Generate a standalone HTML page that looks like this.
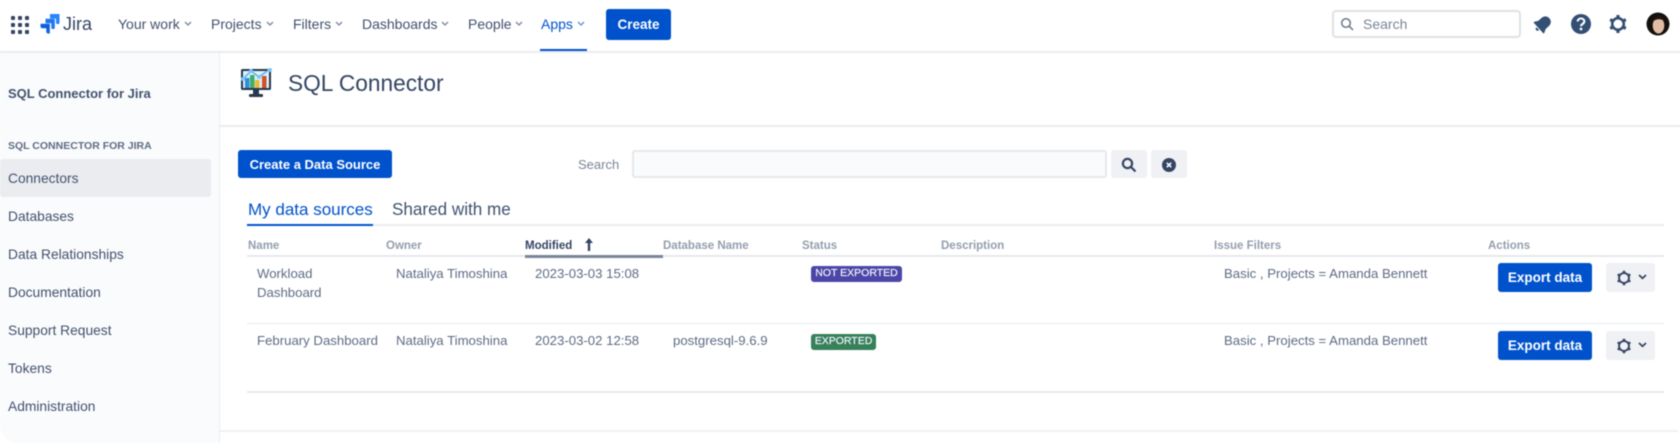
<!DOCTYPE html>
<html lang="en">
<head>
<meta charset="utf-8">
<title>SQL Connector</title>
<style>
html,body{margin:0;padding:0;width:1680px;height:444px;overflow:hidden;background:#fff}
#p{position:relative;width:1680px;height:444px;overflow:hidden;font-family:"Liberation Sans",sans-serif;filter:blur(.55px);background:#fff}
#p div,#p a,#p svg{position:absolute}
.t{white-space:nowrap;line-height:20px;height:20px;transform:translateY(-50%)}
.nav{font-size:14px;color:#42526e;top:24px}
.side{font-size:13.800px;color:#42526e;left:8px;margin-top:1px}
.th{font-size:11.500px;color:#7a869a;top:246px;font-weight:bold;opacity:.8}
.td{font-size:13.200px;color:#5e6c84;margin-top:1px}
.btn{background:#0052cc;color:#fff;border-radius:3px;text-align:center;font-size:13.500px;font-weight:bold}
.gray{background:#f0f1f4;border-radius:3px}
.line{background:#ebecf0}
.badge{color:#f2f2fa;font-size:10.500px;border-radius:3px;text-align:center;line-height:15px;height:16px;-webkit-text-stroke:.2px #f2f2fa}
</style>
</head>
<body>
<div id="p">
  <!-- sidebar -->
  <div style="left:0;top:51px;width:220px;height:392px;background:#fafbfc;border-bottom-left-radius:18px;border-right:1px solid #ebecf0;box-sizing:border-box"></div>
  <!-- top nav -->
  <div style="left:0;top:0;width:1680px;height:51px;background:#fff;border-bottom:2px solid #ebecf0;box-sizing:content-box"></div>

  <svg style="left:11px;top:16px" width="18" height="18" viewBox="0 0 18 18" fill="#344563">
    <rect x="0" y="0" width="4" height="4" rx="1"/><rect x="7" y="0" width="4" height="4" rx="1"/><rect x="14" y="0" width="4" height="4" rx="1"/>
    <rect x="0" y="7" width="4" height="4" rx="1"/><rect x="7" y="7" width="4" height="4" rx="1"/><rect x="14" y="7" width="4" height="4" rx="1"/>
    <rect x="0" y="14" width="4" height="4" rx="1"/><rect x="7" y="14" width="4" height="4" rx="1"/><rect x="14" y="14" width="4" height="4" rx="1"/>
  </svg>
  <svg style="left:40px;top:14px" width="20" height="20" viewBox="0 0 20 20" fill="#2684ff">
    <path d="M10 0h9.500v9a1 1 0 0 1-1 1h-1.500a1 1 0 0 1-1-1V4.500H10z"/>
    <path fill="#1f78f0" d="M5.500 4.800h9.300v9.200a1 1 0 0 1-1 1h-1.500a1 1 0 0 1-1-1V9.300H5.500z"/>
    <path fill="#0d62dc" d="M0.500 9.800h9.300v9.700h-1.500a2 2 0 0 1-2-2v-3.300H2.500a2 2 0 0 1-2-2z"/>
  </svg>
  <div class="t" style="left:63px;top:24px;font-size:18px;color:#344563">Jira</div>

  <div class="t nav" style="left:118px">Your work</div>
  <div class="t nav" style="left:211px">Projects</div>
  <div class="t nav" style="left:293px">Filters</div>
  <div class="t nav" style="left:362px">Dashboards</div>
  <div class="t nav" style="left:468px">People</div>
  <div class="t nav" style="left:541px;color:#0052cc">Apps</div>
  <svg style="left:184px;top:21px" width="8" height="6" viewBox="0 0 8 6" fill="none" stroke="#7a869a" stroke-width="1.300"><path d="M1 1l3 3 3-3"/></svg>
  <svg style="left:266px;top:21px" width="8" height="6" viewBox="0 0 8 6" fill="none" stroke="#7a869a" stroke-width="1.300"><path d="M1 1l3 3 3-3"/></svg>
  <svg style="left:335px;top:21px" width="8" height="6" viewBox="0 0 8 6" fill="none" stroke="#7a869a" stroke-width="1.300"><path d="M1 1l3 3 3-3"/></svg>
  <svg style="left:441px;top:21px" width="8" height="6" viewBox="0 0 8 6" fill="none" stroke="#7a869a" stroke-width="1.300"><path d="M1 1l3 3 3-3"/></svg>
  <svg style="left:515px;top:21px" width="8" height="6" viewBox="0 0 8 6" fill="none" stroke="#7a869a" stroke-width="1.300"><path d="M1 1l3 3 3-3"/></svg>
  <svg style="left:577px;top:21px" width="8" height="6" viewBox="0 0 8 6" fill="none" stroke="#5e8fd8" stroke-width="1.300"><path d="M1 1l3 3 3-3"/></svg>
  <div style="left:540px;top:49px;width:47px;height:2px;background:#0052cc"></div>
  <div class="btn" style="left:606px;top:9px;width:65px;height:31px;line-height:31px">Create</div>

  <!-- top right -->
  <div style="left:1332px;top:10px;width:189px;height:28px;border:2px solid #dfe1e6;border-radius:4px;box-sizing:border-box;background:#fff"></div>
  <svg style="left:1340px;top:17px" width="14" height="14" viewBox="0 0 14 14" fill="none" stroke="#6b778c" stroke-width="1.500"><circle cx="6" cy="6" r="4.300"/><path d="M9.200 9.200L13 13"/></svg>
  <div class="t" style="left:1363px;top:24px;font-size:14px;color:#7a869a">Search</div>
  <svg style="left:1532px;top:13px" width="22" height="22" viewBox="0 0 22 22" fill="#344f74">
    <g transform="rotate(48 11 11)">
      <path d="M11 2.500c-3.500 0-5.500 2.500-5.500 6v4L3.500 16v1h15v-1l-2-3.500v-4c0-3.500-2-6-5.500-6z"/>
      <path d="M9 18h4c0 1.300-.9 2.200-2 2.200S9 19.300 9 18z"/>
    </g>
  </svg>
  <svg style="left:1570px;top:13px" width="22" height="22" viewBox="0 0 22 22">
    <circle cx="11" cy="11" r="10" fill="#344f74"/>
    <path d="M7.700 8.500c0-2 1.500-3 3.300-3s3.300 1.100 3.300 2.900c0 2.700-3.300 2.500-3.300 4.800" fill="none" stroke="#fff" stroke-width="2.100"/>
    <circle cx="11" cy="16" r="1.400" fill="#fff"/>
  </svg>
  <svg style="left:1608px;top:14px" width="20" height="20" viewBox="0 0 20 20" fill="none">
    <circle cx="10" cy="10" r="5.800" stroke="#344f74" stroke-width="2.600"/>
    <g stroke="#344f74" stroke-width="3.200">
      <path d="M10 1v3M10 16v3M2.200 5.500l2.600 1.500M15.200 13l2.600 1.500M2.200 14.500L4.800 13M15.200 7l2.600-1.500"/>
    </g>
  </svg>
  <svg style="left:1646px;top:12px" width="24" height="24" viewBox="0 0 24 24">
    <circle cx="12" cy="12" r="11.500" fill="#14100e"/>
    <ellipse cx="12.500" cy="13.500" rx="5.800" ry="8" fill="#e2bda4"/>
    <path d="M6.500 10c1-4.500 3.500-6.500 6.500-6.500s5 2 5.200 5.500c-3-2.500-8.500-2.500-11.700 1z" fill="#1f1612"/>
  </svg>

  <!-- sidebar content -->
  <div class="t" style="left:8px;top:94px;font-size:13px;font-weight:bold;color:#42526e">SQL Connector for Jira</div>
  <div class="t" style="left:8px;top:146px;font-size:10.500px;font-weight:bold;color:#5e6c84">SQL CONNECTOR FOR JIRA</div>
  <div style="left:0;top:159px;width:211px;height:38px;background:#ebecf0;border-radius:3px"></div>
  <div class="t side" style="top:178px">Connectors</div>
  <div class="t side" style="top:216px">Databases</div>
  <div class="t side" style="top:254px">Data Relationships</div>
  <div class="t side" style="top:292px">Documentation</div>
  <div class="t side" style="top:330px">Support Request</div>
  <div class="t side" style="top:368px">Tokens</div>
  <div class="t side" style="top:406px">Administration</div>

  <!-- header -->
  <svg style="left:240px;top:67px" width="33" height="32" viewBox="0 0 33 32">
    <rect x="1" y="2" width="30" height="21" rx="1.500" fill="#26384e"/>
    <rect x="3" y="4" width="26" height="17" fill="#dff1fb"/>
    <rect x="5" y="11" width="4.500" height="10" fill="#2f8fd6"/>
    <rect x="10" y="8" width="4.500" height="13" fill="#3fae6a"/>
    <rect x="15" y="13" width="4.500" height="8" fill="#e8b93a"/>
    <rect x="22" y="9" width="4.500" height="12" fill="#d4502a"/>
    <path d="M3 12L11 4l8 6 11-8" fill="none" stroke="#58b4f2" stroke-width="1.600"/>
    <circle cx="3" cy="12" r="2" fill="#7cc6f7"/><circle cx="11" cy="4" r="2" fill="#7cc6f7"/><circle cx="19" cy="10" r="2" fill="#7cc6f7"/><circle cx="30" cy="3" r="2" fill="#7cc6f7"/>
    <rect x="13" y="23" width="6" height="4" fill="#26384e"/>
    <rect x="9" y="27" width="14" height="3" rx="1" fill="#26384e"/>
  </svg>
  <div class="t" style="left:288px;top:83px;font-size:22.700px;color:#344563;line-height:30px;height:30px">SQL Connector</div>
  <div class="line" style="left:220px;top:125px;width:1460px;height:2px"></div>

  <!-- toolbar -->
  <div class="btn" style="left:238px;top:150px;width:154px;height:28px;line-height:29px;font-size:13px">Create a Data Source</div>
  <div class="t" style="left:578px;top:165px;font-size:13px;color:#7a869a">Search</div>
  <div style="left:632px;top:150px;width:475px;height:28px;background:#fafbfc;border:2px solid #e6e8ec;border-radius:3px;box-sizing:border-box"></div>
  <div class="gray" style="left:1111px;top:150px;width:36px;height:28px"></div>
  <svg style="left:1121px;top:157px" width="16" height="16" viewBox="0 0 16 16" fill="none" stroke="#344563" stroke-width="2.200"><circle cx="6.500" cy="6.500" r="4.600"/><path d="M10 10l4.500 4.500"/></svg>
  <div class="gray" style="left:1151px;top:150px;width:36px;height:28px"></div>
  <svg style="left:1162px;top:158px" width="14" height="14" viewBox="0 0 14 14"><circle cx="7" cy="7" r="7" fill="#344563"/><path d="M4.800 4.800l4.400 4.400M9.200 4.800L4.800 9.200" stroke="#fff" stroke-width="1.600"/></svg>

  <!-- tabs -->
  <div class="t" style="left:248px;top:210px;font-size:17px;color:#0052cc;line-height:24px;height:24px">My data sources</div>
  <div class="t" style="left:392px;top:210px;font-size:17.100px;color:#42526e;line-height:24px;height:24px">Shared with me</div>
  <div class="line" style="left:247px;top:224px;width:1417px;height:2px"></div>
  <div style="left:247px;top:224px;width:126px;height:2px;background:#0052cc"></div>

  <!-- table head -->
  <div class="t th" style="left:248px">Name</div>
  <div class="t th" style="left:386px">Owner</div>
  <div class="t th" style="left:525px;color:#344563;opacity:1">Modified</div>
  <svg style="left:584px;top:238px" width="10" height="13" viewBox="0 0 10 13" fill="#344563"><path d="M5 0L9 5H6.200v8H3.800V5H1z"/></svg>
  <div class="t th" style="left:663px">Database Name</div>
  <div class="t th" style="left:802px">Status</div>
  <div class="t th" style="left:941px">Description</div>
  <div class="t th" style="left:1214px">Issue Filters</div>
  <div class="t th" style="left:1488px">Actions</div>
  <div class="line" style="left:247px;top:255px;width:1417px;height:2px;background:#e6e8ec"></div>
  <div style="left:525px;top:255px;width:138px;height:3px;background:#7a869a"></div>

  <!-- row 1 -->
  <div class="t td" style="left:257px;top:273px">Workload</div>
  <div class="t td" style="left:257px;top:292px">Dashboard</div>
  <div class="t td" style="left:396px;top:273px">Nataliya Timoshina</div>
  <div class="t td" style="left:535px;top:273px">2023-03-03 15:08</div>
  <div class="badge" style="left:811px;top:266px;width:91px;background:#4c46a8">NOT EXPORTED</div>
  <div class="t td" style="left:1224px;top:273px">Basic , Projects = Amanda Bennett</div>
  <div class="btn" style="left:1498px;top:263px;width:94px;height:29px;line-height:29px">Export data</div>
  <div class="gray" style="left:1606px;top:263px;width:49px;height:29px"></div>
  <svg style="left:1616px;top:270px" width="16" height="16" viewBox="0 0 20 20" fill="none"><circle cx="10" cy="10" r="6.200" stroke="#344563" stroke-width="2.400"/><path stroke="#344563" stroke-width="3" d="M10 1v2.500M10 16.500V19M2.200 5.500l2.200 1.300M15.600 13.200l2.200 1.300M2.200 14.500l2.200-1.300M15.600 6.800l2.200-1.300"/></svg>
  <svg style="left:1638px;top:274px" width="9" height="6" viewBox="0 0 9 6" fill="none" stroke="#344563" stroke-width="1.700"><path d="M1 1l3.500 3.300L8 1"/></svg>

  <div class="line" style="left:247px;top:323px;width:1417px;height:1px"></div>

  <!-- row 2 -->
  <div class="t td" style="left:257px;top:340px">February Dashboard</div>
  <div class="t td" style="left:396px;top:340px">Nataliya Timoshina</div>
  <div class="t td" style="left:535px;top:340px">2023-03-02 12:58</div>
  <div class="t td" style="left:673px;top:340px">postgresql-9.6.9</div>
  <div class="badge" style="left:811px;top:334px;width:65px;background:#36805a">EXPORTED</div>
  <div class="t td" style="left:1224px;top:340px">Basic , Projects = Amanda Bennett</div>
  <div class="btn" style="left:1498px;top:331px;width:94px;height:29px;line-height:29px">Export data</div>
  <div class="gray" style="left:1606px;top:331px;width:49px;height:29px"></div>
  <svg style="left:1616px;top:338px" width="16" height="16" viewBox="0 0 20 20" fill="none"><circle cx="10" cy="10" r="6.200" stroke="#344563" stroke-width="2.400"/><path stroke="#344563" stroke-width="3" d="M10 1v2.500M10 16.500V19M2.200 5.500l2.200 1.300M15.600 13.200l2.200 1.300M2.200 14.500l2.200-1.300M15.600 6.800l2.200-1.300"/></svg>
  <svg style="left:1638px;top:342px" width="9" height="6" viewBox="0 0 9 6" fill="none" stroke="#344563" stroke-width="1.700"><path d="M1 1l3.500 3.300L8 1"/></svg>

  <div class="line" style="left:247px;top:391px;width:1417px;height:2px;background:#e6e8ec"></div>
  <div class="line" style="left:220px;top:430px;width:1458px;height:2px;background:#f0f1f3"></div>
</div>
</body>
</html>
